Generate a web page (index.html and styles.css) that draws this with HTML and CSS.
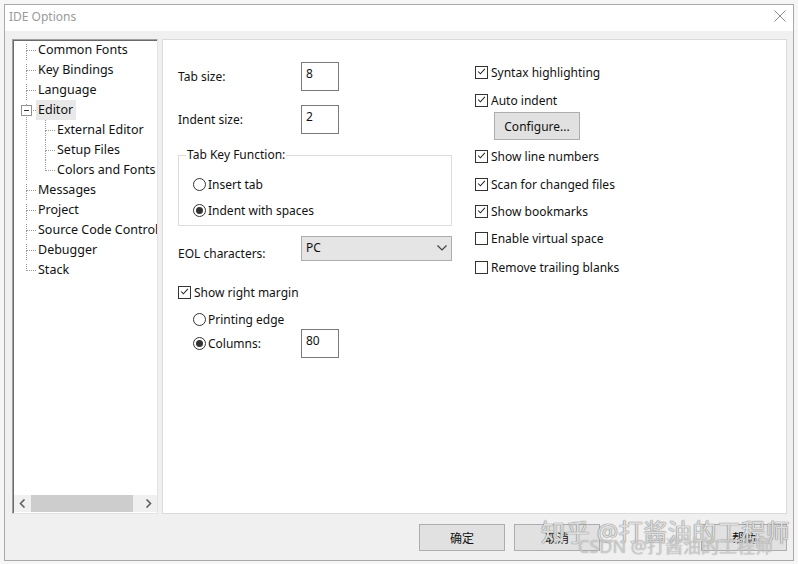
FILE: index.html
```html
<!DOCTYPE html>
<html lang="en">
<head>
  <meta charset="UTF-8">
  <title>IDE Options</title>
  <link rel="stylesheet" href="styles.css">
</head>
<body>
  <div class="window">
    <div class="titlebar">
      <span class="title">IDE Options</span>
      <svg class="close" width="12" height="12" viewBox="0 0 12 12"><path d="M0.5 0.5L11.5 11.5M11.5 0.5L0.5 11.5" stroke="#8a8a8a" stroke-width="1"/></svg>
    </div>

    <div class="content">
      <div class="panes">
        <!-- option tree -->
        <div class="tree-box">
          <div class="tree">
            <ul>
              <li>Common Fonts</li>
              <li>Key Bindings</li>
              <li>Language</li>
              <li><span class="toggle"></span><span class="sel">Editor</span>
                <ul>
                  <li>External Editor</li>
                  <li>Setup Files</li>
                  <li>Colors and Fonts</li>
                </ul>
              </li>
              <li>Messages</li>
              <li>Project</li>
              <li>Source Code Control</li>
              <li>Debugger</li>
              <li>Stack</li>
            </ul>
          </div>
          <div class="hscroll">
            <svg class="arrow" width="8" height="9" viewBox="0 0 8 9"><path d="M6 0.5L2 4.5L6 8.5" fill="none" stroke="#606060" stroke-width="1.6"/></svg>
            <div class="track"><div class="thumb"></div></div>
            <svg class="arrow" width="8" height="9" viewBox="0 0 8 9"><path d="M2 0.5L6 4.5L2 8.5" fill="none" stroke="#606060" stroke-width="1.6"/></svg>
          </div>
        </div>

        <!-- editor page -->
        <div class="page">
          <div class="col-left">
            <div class="row">
              <span class="label">Tab size:</span>
              <span class="spin">8</span>
            </div>
            <div class="row row-indent">
              <span class="label">Indent size:</span>
              <span class="spin">2</span>
            </div>

            <fieldset class="group">
              <legend>Tab Key Function:</legend>
              <div class="opt"><span class="radio"></span>Insert tab</div>
              <div class="opt opt-2"><span class="radio on"></span>Indent with spaces</div>
            </fieldset>

            <div class="row row-eol">
              <span class="label label-low">EOL characters:</span>
              <span class="select">PC
                <svg width="10" height="6" viewBox="0 0 10 6"><path d="M0.5 0.5L5 5L9.5 0.5" fill="none" stroke="#404040" stroke-width="1.2"/></svg>
              </span>
            </div>

            <div class="opt opt-margin"><span class="cb on"><svg viewBox="0 0 13 13"><path d="M2.5 6.5L5.2 9.2L10.5 3.5"/></svg></span>Show right margin</div>
            <div class="opt opt-sub"><span class="radio"></span>Printing edge</div>
            <div class="row row-cols">
              <span class="opt opt-col"><span class="radio on"></span>Columns:</span>
              <span class="spin">80</span>
            </div>
          </div>

          <div class="col-right">
            <div class="opt"><span class="cb on"><svg viewBox="0 0 13 13"><path d="M2.5 6.5L5.2 9.2L10.5 3.5"/></svg></span>Syntax highlighting</div>
            <div class="opt gap-8"><span class="cb on"><svg viewBox="0 0 13 13"><path d="M2.5 6.5L5.2 9.2L10.5 3.5"/></svg></span>Auto indent</div>
            <button type="button" class="btn btn-config">Configure...</button>
            <div class="opt gap-6"><span class="cb on"><svg viewBox="0 0 13 13"><path d="M2.5 6.5L5.2 9.2L10.5 3.5"/></svg></span>Show line numbers</div>
            <div class="opt gap-8"><span class="cb on"><svg viewBox="0 0 13 13"><path d="M2.5 6.5L5.2 9.2L10.5 3.5"/></svg></span>Scan for changed files</div>
            <div class="opt gap-7"><span class="cb on"><svg viewBox="0 0 13 13"><path d="M2.5 6.5L5.2 9.2L10.5 3.5"/></svg></span>Show bookmarks</div>
            <div class="opt gap-7"><span class="cb"></span>Enable virtual space</div>
            <div class="opt gap-9"><span class="cb"></span>Remove trailing blanks</div>
          </div>
        </div>
      </div>

      <div class="buttons">
        <button type="button" class="btn">确定</button>
        <button type="button" class="btn">取消</button>
        <button type="button" class="btn btn-help">帮助</button>
      </div>
    </div>

    <div class="watermark">
      <span class="wm-1">知乎 @打酱油的工程师</span>
      <span class="wm-2">CSDN @打酱油的工程师</span>
    </div>
  </div>
</body>
</html>
```

FILE: styles.css
```css
body {
  margin: 0;
  padding: 4px 0 0 4px;
  background-color: #f6f6f6;
  font-family: "Noto Sans", "Noto Sans CJK SC", sans-serif;
  font-size: 12px;
  color: #111;
}

.window {
  position: relative;
  width: 790px;
  box-sizing: border-box;
  border: 1px solid #a9a9a9;
  background: #f0f0f0;
}

.titlebar {
  height: 26px;
  box-sizing: border-box;
  background: #fff;
  display: flex;
  align-items: center;
  justify-content: space-between;
  padding: 0 7px 4px 4px;
}

.title {
  color: #9a9a9a;
  font-size: 12px;
}

.content {
  padding: 8px 6px 9px 7px;
}

.panes {
  display: flex;
  gap: 4px;
  height: 475px;
}

/* tree */
.tree-box {
  width: 146px;
  box-sizing: border-box;
  display: flex;
  flex-direction: column;
  background: #fff;
  border: 1px solid;
  border-color: #a0a0a0 #e3e3e3 #e3e3e3 #a0a0a0;
  box-shadow: inset 1px 1px 0 #6a6a6a;
}

.tree {
  flex: 1;
  overflow: hidden;
  white-space: nowrap;
  font-size: 12.5px;
}

.tree ul {
  list-style: none;
  margin: 0;
  padding: 0 0 0 13px;
}

.tree ul ul {
  padding-left: 7px;
}

.tree li {
  position: relative;
  padding-left: 12px;
  line-height: 20px;
}

.tree li::before {
  content: '';
  position: absolute;
  left: 0;
  top: 4px;
  width: 9px;
  height: 6px;
  border-left: 1px dotted #9a9a9a;
  border-bottom: 1px dotted #9a9a9a;
}

.tree li::after {
  content: '';
  position: absolute;
  left: 0;
  top: 10px;
  bottom: 0;
  border-left: 1px dotted #9a9a9a;
}

.tree ul ul li::before {
  top: 0;
  height: 10px;
}

.tree li:last-child::after {
  display: none;
}

.toggle {
  position: absolute;
  left: -5px;
  top: 5px;
  width: 11px;
  height: 11px;
  box-sizing: border-box;
  border: 1px solid #919191;
  background: #fff;
  z-index: 1;
}

.toggle::after {
  content: '';
  position: absolute;
  left: 2px;
  top: 4px;
  width: 5px;
  height: 1px;
  background: #333;
}

.sel {
  background: #e8e8e8;
  margin-left: -2px;
  padding: 0 3px 0 2px;
  display: inline-block;
}

.hscroll {
  height: 17px;
  display: flex;
  align-items: center;
  background: #f0f0f0;
  margin: 0 0 1px 1px;
}

.hscroll .arrow {
  width: 17px;
  flex: none;
}

.track {
  flex: 1;
  height: 17px;
}

.thumb {
  width: 102px;
  height: 17px;
  background: #cdcdcd;
}

/* page */
.page {
  flex: 1;
  background: #fff;
  border: 1px solid #dadada;
  display: flex;
  gap: 23px;
  padding: 22px 0 0 15px;
}

.col-left {
  width: 274px;
}

.row {
  display: flex;
  align-items: center;
}

.label {
  width: 123px;
}

.spin {
  width: 38px;
  height: 29px;
  box-sizing: border-box;
  border: 1px solid #7a7a7a;
  padding: 1px 0 0 4px;
  line-height: 20px;
}

.row-indent {
  margin-top: 14px;
}

.group {
  margin: 13px 0 0;
  padding: 11px 0 5px 0;
  border: 1px solid #dcdcdc;
  width: 274px;
  box-sizing: border-box;
}

.group legend {
  padding: 0 1px;
  margin-left: 7px;
  line-height: 16px;
}

.group .opt {
  padding-left: 14px;
}

.opt {
  display: flex;
  align-items: center;
  height: 20px;
  white-space: nowrap;
}

.opt-2 {
  margin-top: 6px;
}

.radio {
  width: 13px;
  height: 13px;
  box-sizing: border-box;
  border: 1px solid #333;
  border-radius: 50%;
  margin-right: 2px;
  display: flex;
  align-items: center;
  justify-content: center;
}

.radio.on::after {
  content: '';
  width: 7px;
  height: 7px;
  border-radius: 50%;
  background: #333;
}

.cb {
  width: 13px;
  height: 13px;
  box-sizing: border-box;
  border: 1px solid #333;
  margin-right: 3px;
  flex: none;
}

.cb svg {
  display: block;
  width: 11px;
  height: 11px;
  margin: -1px 0 0 0;
}

.cb svg path {
  fill: none;
  stroke: #222;
  stroke-width: 1.2;
}

.row-eol {
  margin-top: 10px;
  align-items: flex-start;
}

.label-low {
  padding-top: 9px;
}

.select {
  width: 151px;
  height: 25px;
  box-sizing: border-box;
  background: #e5e5e5;
  border: 1px solid #adadad;
  display: flex;
  align-items: center;
  justify-content: space-between;
  padding: 0 4px 2px 4px;
}

.opt-margin {
  margin-top: 20px;
}

.opt-sub {
  margin-top: 7px;
  padding-left: 15px;
}

.row-cols {
  height: 29px;
}

.opt-col {
  width: 108px;
  padding-left: 15px;
}

.gap-6 { margin-top: 6px; }
.gap-7 { margin-top: 7px; }
.gap-8 { margin-top: 8px; }
.gap-9 { margin-top: 9px; }

.btn {
  font-family: "Noto Sans", "Noto Sans CJK SC", sans-serif;
  font-size: 12px;
  color: #111;
  width: 86px;
  height: 27px;
  background: #e1e1e1;
  border: 1px solid #adadad;
  padding: 0;
}

.btn-config {
  display: block;
  height: 28px;
  margin: 2px 0 0 19px;
}

.buttons {
  display: flex;
  justify-content: flex-end;
  gap: 9px;
  margin-top: 10px;
}

.btn-help {
  margin-left: 92px;
}

/* watermark over the dialog */
.watermark {
  position: absolute;
  left: 536px;
  top: 513px;
  pointer-events: none;
}

.wm-1 {
  display: block;
  font-size: 24px;
  line-height: 28px;
  color: rgba(255, 255, 255, 0.75);
  text-shadow: 0 0 1px #777, 0 0 1px #777;
  letter-spacing: 0.5px;
}

.wm-2 {
  display: block;
  margin: -11px 0 0 37px;
  font-size: 18px;
  line-height: 22px;
  color: rgba(240, 240, 240, 0.6);
  text-shadow: 0 0 1px #888;
}
```
